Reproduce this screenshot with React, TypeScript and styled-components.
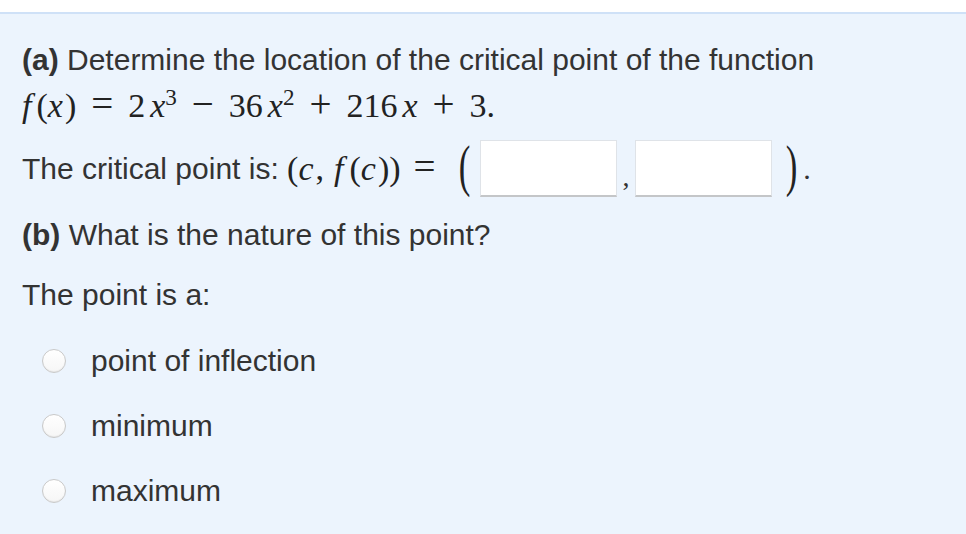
import React from "react";
import styled, { createGlobalStyle } from "styled-components";

/* -------------------------------------------------------------------------- */

const GlobalStyle = createGlobalStyle`
  html, body {
    margin: 0;
    padding: 0;
    background: #ffffff;
  }
  body {
    font-family: "Liberation Sans", Arial, sans-serif;
    color: #333333;
  }
`;

const Page = styled.div`
  padding-top: 12px;
  width: 966px;
  height: 534px;
  box-sizing: border-box;
  overflow: hidden;
`;

const Panel = styled.section`
  background: #ecf4fd;
  border-top: 2px solid #cfe1f7;
  height: 100%;
  padding: 28px 22px 0 22px;
  box-sizing: border-box;
  font-size: 30px;
  line-height: 36px;
`;

const Line = styled.div<{ $gap?: number }>`
  display: flex;
  align-items: center;
  margin-top: ${p => p.$gap ?? 0}px;
  white-space: nowrap;
`;

const Bold = styled.b`
  font-weight: 700;
`;

/* ------------------------------- math pieces ------------------------------ */

const Math = styled.span`
  font-family: "Liberation Serif", "Times New Roman", serif;
  font-size: 34px;
  line-height: 36px;
  color: #222222;
`;

const Var = styled.i<{ $pad?: number }>`
  font-style: italic;
  padding-right: ${p => p.$pad ?? 0}px;
`;

const Sup = styled.sup`
  font-size: 0.68em;
  vertical-align: 0.5em;
  line-height: 0;
`;

const Op = styled.span<{ $w?: number }>`
  display: inline-block;
  width: ${p => p.$w ?? 52}px;
  text-align: center;
  font-size: 1.15em;
  line-height: 0;
`;

const Gap = styled.span<{ $w: number }>`
  display: inline-block;
  width: ${p => p.$w}px;
`;

const BigParen = styled.span<{ $side: "left" | "right" }>`
  font-family: "Liberation Serif", "Times New Roman", serif;
  font-size: 58px;
  line-height: 1;
  color: #222222;
  display: inline-block;
  transform: scaleX(0.6);
  margin-top: -6px;
  margin-left: ${p => (p.$side === "left" ? 6 : 10)}px;
  margin-right: ${p => (p.$side === "left" ? 6 : 0)}px;
`;

const AnswerBox = styled.input`
  width: 137px;
  height: 57px;
  box-sizing: border-box;
  border: 1px solid #dfe3e8;
  border-bottom: 2px solid #c4c6c8;
  background: #ffffff;
  margin: 0;
  padding: 0 8px;
  font-size: 20px;
  outline: none;
`;

const Comma = styled.span`
  font-family: "Liberation Serif", "Times New Roman", serif;
  font-size: 28px;
  width: 18px;
  text-align: center;
  align-self: flex-end;
  margin-bottom: 2px;
`;

const Dot = styled.span`
  font-family: "Liberation Serif", "Times New Roman", serif;
  font-size: 30px;
  margin-left: 2px;
`;

/* ------------------------------ radio options ----------------------------- */

const Options = styled.div`
  display: flex;
  flex-direction: column;
  gap: 30px;
  margin-top: 30px;
  padding-left: 20px;
`;

const Option = styled.label`
  display: flex;
  align-items: center;
  gap: 25px;
  height: 35px;
`;

const Radio = styled.span`
  width: 24px;
  height: 24px;
  border-radius: 50%;
  box-sizing: border-box;
  border: 1px solid #c9c9c9;
  background: linear-gradient(#ffffff, #f6f6f6);
  box-shadow: inset 0 -1px 1px rgba(0, 0, 0, 0.06);
`;

/* -------------------------------------------------------------------------- */

const choices = ["point of inflection", "minimum", "maximum"];

const App = () => {
  return (
    <>
      <GlobalStyle />
      <Page>
        <Panel>
          <Line>
            <span>
              <Bold>(a)</Bold> Determine the location of the critical point of the function
            </span>
          </Line>
          <Line $gap={10}>
            <Math>
              <Var $pad={5}>f</Var>(<Var $pad={2}>x</Var>)<Op>=</Op>2<Gap $w={5} />
              <Var>x</Var>
              <Sup>3</Sup>
              <Op>−</Op>36<Gap $w={5} />
              <Var>x</Var>
              <Sup>2</Sup>
              <Op>+</Op>216<Gap $w={5} />
              <Var>x</Var>
              <Op>+</Op>3.
            </Math>
          </Line>
          <Line $gap={16}>
            <span>The critical point is:&nbsp;</span>
            <Math>
              (<Var $pad={2}>c</Var>,<Gap $w={10} />
              <Var $pad={6}>f</Var>(<Var $pad={2}>c</Var>))<Op $w={48}>=</Op>
            </Math>
            <BigParen $side="left">(</BigParen>
            <AnswerBox />
            <Comma>,</Comma>
            <AnswerBox />
            <BigParen $side="right">)</BigParen>
            <Dot>.</Dot>
          </Line>
          <Line $gap={20}>
            <span>
              <Bold>(b)</Bold> What is the nature of this point?
            </span>
          </Line>
          <Line $gap={24}>The point is a:</Line>
          <Options>
            {choices.map(c => (
              <Option key={c}>
                <Radio />
                {c}
              </Option>
            ))}
          </Options>
        </Panel>
      </Page>
    </>
  );
};

export default App;
